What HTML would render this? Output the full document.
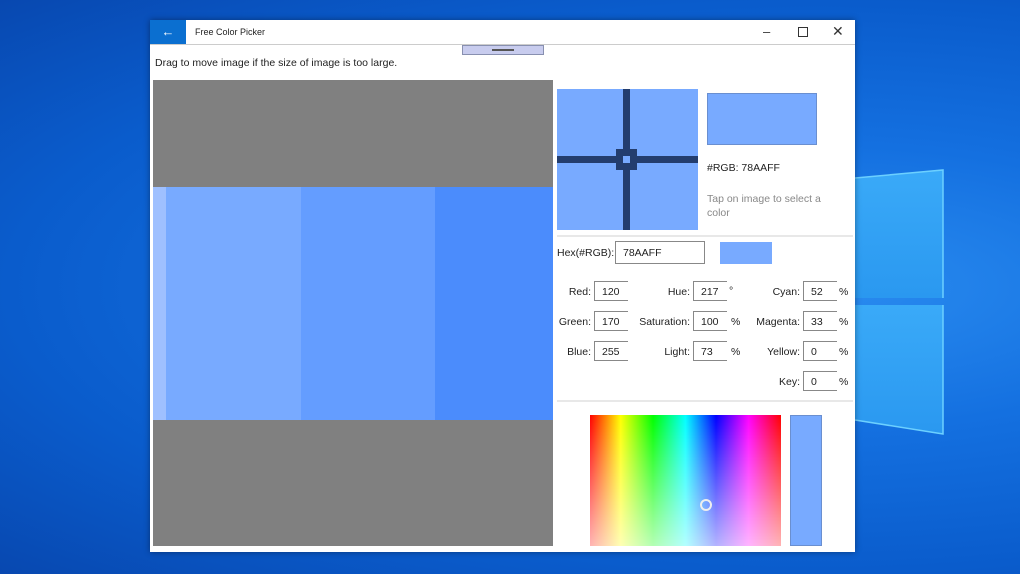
<!DOCTYPE html><html><head><style>
body{margin:0;width:1020px;height:574px;overflow:hidden;position:relative;font-family:"Liberation Sans",sans-serif;background:radial-gradient(ellipse at 80% 50%,#2a8cf0 0%,#1470e0 35%,#0a5ccc 70%,#0848b0 100%);}
.a{position:absolute}
.lbl{position:absolute;font-size:10.5px;color:#222;text-align:right}
.in{position:absolute;height:20px;border:1px solid #888;border-right:none;background:#fff;font-size:10.5px;line-height:20px;padding-left:7px;box-sizing:border-box;color:#222}
</style></head><body>
<svg class="a" style="left:0;top:0" width="1020" height="574">
<defs><linearGradient id="p" x1="0" y1="0" x2="0" y2="1"><stop offset="0" stop-color="#3aaaf8"/><stop offset="1" stop-color="#2a98f0"/></linearGradient></defs>
<polygon points="855,178 943,170 943,298 855,298" fill="url(#p)"/>
<polygon points="855,305 943,305 943,434 855,420" fill="url(#p)"/>
<polyline points="855,178 943,170 943,298" fill="none" stroke="#6cd0ff" stroke-width="1.5"/>
<polyline points="943,305 943,434 855,420" fill="none" stroke="#6cd0ff" stroke-width="1.5"/>
</svg>
<div class="a" style="left:150px;top:20px;width:705px;height:532px;background:#fff;box-shadow:0 0 6px rgba(0,0,0,.4)"></div>
<div class="a" style="left:150px;top:20px;width:36px;height:24px;background:#0b6fd0;color:#fff;font-size:13px;text-align:center;line-height:24px">&#8592;</div>
<div class="a" style="left:195px;top:27px;font-size:9px;color:#222">Free Color Picker</div>
<div class="a" style="left:763px;top:24px;font-size:13px;color:#333">&#8211;</div>
<div class="a" style="left:798px;top:27px;width:8px;height:8px;border:1px solid #333"></div>
<div class="a" style="left:832px;top:23px;font-size:14px;color:#333">&#10005;</div>
<div class="a" style="left:150px;top:44px;width:705px;height:1px;background:#ccc"></div>
<div class="a" style="left:462px;top:45px;width:80px;height:8px;background:#c8ccee;border:1px solid #8890b0"><div style="margin:3px auto;width:22px;height:2px;background:#555"></div></div>
<div class="a" style="left:155px;top:57px;font-size:10.5px;color:#222">Drag to move image if the size of image is too large.</div>
<div class="a" style="left:153px;top:80px;width:400px;height:466px;background:#808080"></div>
<div class="a" style="left:153px;top:187px;width:13px;height:233px;background:#9fc0ff"></div>
<div class="a" style="left:166px;top:187px;width:135px;height:233px;background:#78aaff"></div>
<div class="a" style="left:301px;top:187px;width:134px;height:233px;background:#649dff"></div>
<div class="a" style="left:435px;top:187px;width:118px;height:233px;background:#4b8cfc"></div>
<div class="a" style="left:557px;top:89px;width:141px;height:141px;background:#78aaff">
<div class="a" style="left:66px;top:0;width:7px;height:141px;background:#233d6e"></div>
<div class="a" style="left:0;top:67px;width:141px;height:7px;background:#233d6e"></div>
<div class="a" style="left:59px;top:60px;width:21px;height:21px;background:#233d6e"><div style="margin:7px;width:7px;height:7px;background:#78aaff"></div></div>
</div>
<div class="a" style="left:707px;top:93px;width:110px;height:52px;background:#78aaff;border:1px solid #6a8fd0;box-sizing:border-box"></div>
<div class="a" style="left:707px;top:162px;font-size:10.5px;color:#222">#RGB: 78AAFF</div>
<div class="a" style="left:707px;top:192px;font-size:10.5px;color:#888;line-height:14px;width:120px">Tap on image to select a color</div>
<div class="a" style="left:557px;top:235px;width:296px;height:2px;background:#e8e8e8"></div>
<div class="lbl" style="left:557px;top:247px">Hex(#RGB):</div>
<div class="in" style="left:615px;top:241px;width:90px;height:23px;border-right:1px solid #888;line-height:23px">78AAFF</div>
<div class="a" style="left:720px;top:242px;width:52px;height:22px;background:#78aaff"></div>
<div class="lbl" style="left:560px;top:286px;width:31px">Red:</div><div class="in" style="left:594px;top:281px;width:34px">120</div>
<div class="lbl" style="left:556px;top:316px;width:35px">Green:</div><div class="in" style="left:594px;top:311px;width:34px">170</div>
<div class="lbl" style="left:556px;top:346px;width:35px">Blue:</div><div class="in" style="left:594px;top:341px;width:34px">255</div>
<div class="lbl" style="left:630px;top:286px;width:60px">Hue:</div><div class="in" style="left:693px;top:281px;width:34px">217</div><div class="lbl" style="left:729px;top:285px">°</div>
<div class="lbl" style="left:630px;top:316px;width:60px">Saturation:</div><div class="in" style="left:693px;top:311px;width:34px">100</div><div class="lbl" style="left:731px;top:316px">%</div>
<div class="lbl" style="left:630px;top:346px;width:60px">Light:</div><div class="in" style="left:693px;top:341px;width:34px">73</div><div class="lbl" style="left:731px;top:346px">%</div>
<div class="lbl" style="left:740px;top:286px;width:60px">Cyan:</div><div class="in" style="left:803px;top:281px;width:34px">52</div><div class="lbl" style="left:839px;top:286px">%</div>
<div class="lbl" style="left:740px;top:316px;width:60px">Magenta:</div><div class="in" style="left:803px;top:311px;width:34px">33</div><div class="lbl" style="left:839px;top:316px">%</div>
<div class="lbl" style="left:740px;top:346px;width:60px">Yellow:</div><div class="in" style="left:803px;top:341px;width:34px">0</div><div class="lbl" style="left:839px;top:346px">%</div>
<div class="lbl" style="left:740px;top:376px;width:60px">Key:</div><div class="in" style="left:803px;top:371px;width:34px">0</div><div class="lbl" style="left:839px;top:376px">%</div>
<div class="a" style="left:557px;top:400px;width:296px;height:2px;background:#e8e8e8"></div>
<div class="a" style="left:590px;top:415px;width:191px;height:131px;background:linear-gradient(to bottom,rgba(255,255,255,0),rgba(255,255,255,.7)),linear-gradient(to right,#f00,#ff0 16%,#0f0 33%,#0ff 50%,#00f 66%,#f0f 83%,#f00)"></div>
<div class="a" style="left:700px;top:499px;width:8px;height:8px;border:2px solid #eee;border-radius:50%"></div>
<div class="a" style="left:790px;top:415px;width:32px;height:131px;background:#78aaff;border:1px solid #6a8fd0;box-sizing:border-box"></div>
</body></html>
